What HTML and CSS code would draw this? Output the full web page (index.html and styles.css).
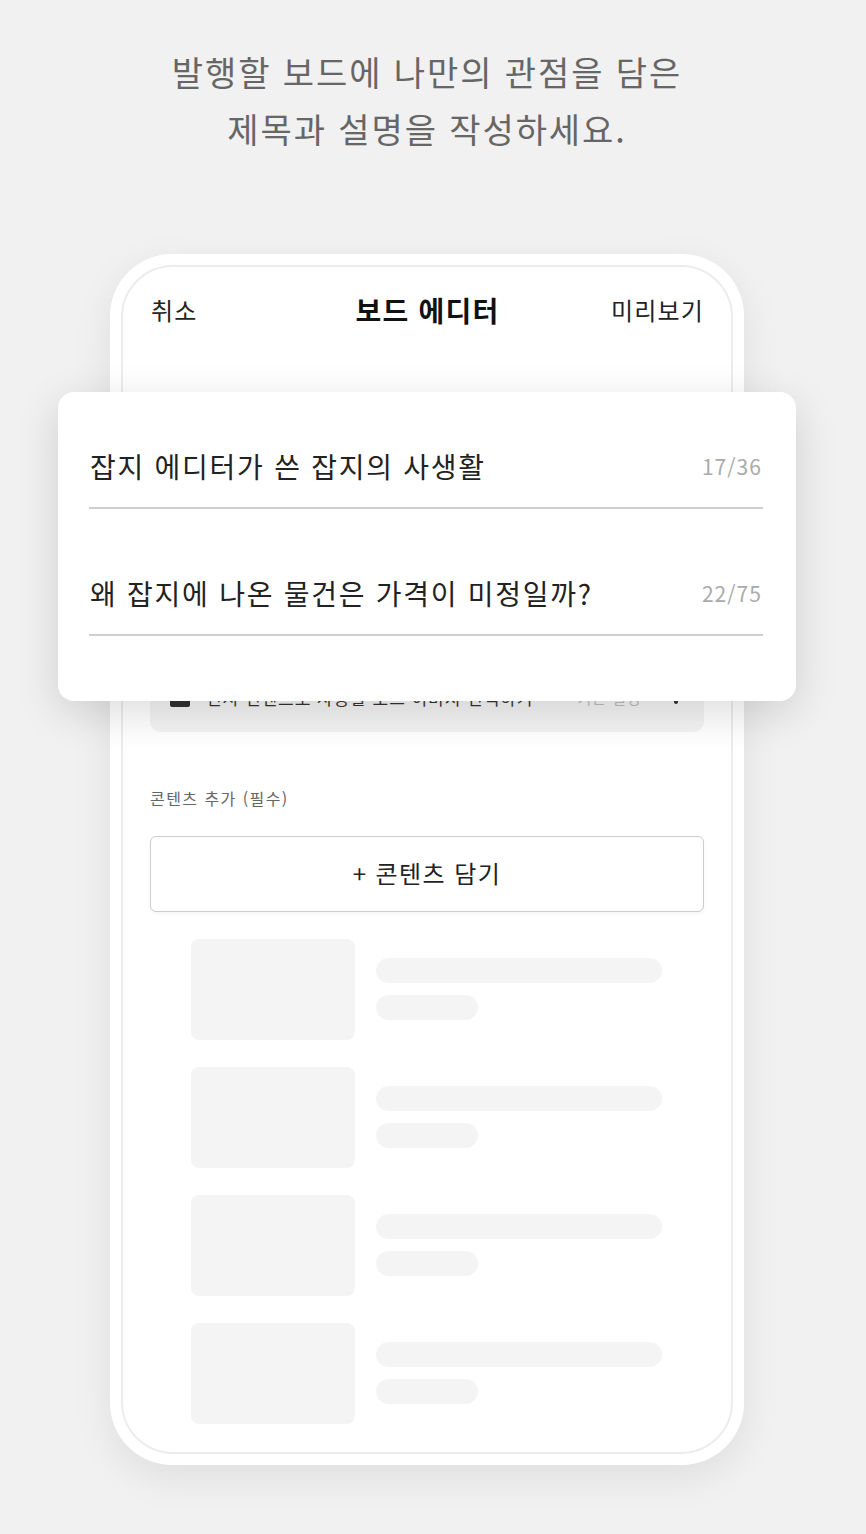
FILE: index.html
```html
<!DOCTYPE html>
<html lang="ko">
<head>
<meta charset="utf-8">
<title>보드 에디터</title>
<link rel="stylesheet" href="styles.css">
</head>
<body>
<div class="page">
  <h1 class="headline">발행할 보드에 나만의 관점을 담은<br>제목과 설명을 작성하세요.</h1>

  <div class="phone">
    <div class="screen">
      <div class="topbar">
        <span class="side left">취소</span>
        <span class="title">보드 에디터</span>
        <span class="side right">미리보기</span>
      </div>

      <div class="fields">
        <div class="mini-field">잡지 에디터가 쓴 잡지의 사생활</div>
        <div class="mini-field">왜 잡지에 나온 물건은 가격이 미정일까?</div>
      </div>

      <div class="option-box">
        <span class="option-icon"></span>
        <span class="option-text">전시 컨텐츠로 사용할 보드 이미지 선택하기</span>
        <span class="option-sub">기본 설정</span>
        <span class="option-mark"></span>
      </div>

      <div class="label">콘텐츠 추가 (필수)</div>
      <button class="add-btn">+ 콘텐츠 담기</button>

      <div class="skeleton-list">
        <div class="sk-row"><div class="sk-thumb"></div><div class="sk-lines"><div class="sk-bar long"></div><div class="sk-bar short"></div></div></div>
        <div class="sk-row"><div class="sk-thumb"></div><div class="sk-lines"><div class="sk-bar long"></div><div class="sk-bar short"></div></div></div>
        <div class="sk-row"><div class="sk-thumb"></div><div class="sk-lines"><div class="sk-bar long"></div><div class="sk-bar short"></div></div></div>
        <div class="sk-row"><div class="sk-thumb"></div><div class="sk-lines"><div class="sk-bar long"></div><div class="sk-bar short"></div></div></div>
      </div>
    </div>

    <div class="card">
      <div class="field">
        <span class="field-text">잡지 에디터가 쓴 잡지의 사생활</span>
        <span class="count">17/36</span>
      </div>
      <div class="field">
        <span class="field-text">왜 잡지에 나온 물건은 가격이 미정일까?</span>
        <span class="count">22/75</span>
      </div>
    </div>
  </div>
</div>
</body>
</html>
```

FILE: styles.css
```css
* { box-sizing: border-box; }

html, body {
  margin: 0;
  padding: 0;
  background: #f1f1f1;
}

body {
  font-family: "Noto Sans CJK KR", "Noto Sans", sans-serif;
  color: #222;
  letter-spacing: 0.06em;
}

.page {
  width: 854px;
  display: flex;
  flex-direction: column;
  align-items: center;
  padding-bottom: 69px;
}

.headline {
  margin: 0;
  padding-top: 43px;
  font-size: 34px;
  line-height: 57px;
  font-weight: 400;
  color: #666;
  text-align: center;
  letter-spacing: 0.056em;
}

.phone {
  position: relative;
  margin-top: 97px;
  width: 634px;
  padding: 11px;
  background: #fff;
  border-radius: 62px;
  box-shadow: 0 12px 40px rgba(0, 0, 0, 0.08);
}

.screen {
  border: 2px solid #ececec;
  border-radius: 52px;
  padding: 0 27px 28px;
  display: flex;
  flex-direction: column;
}

.topbar {
  display: grid;
  grid-template-columns: 1fr auto 1fr;
  align-items: start;
  padding: 25px 0 0 1px;
  height: 92px;
}

.topbar .side {
  font-size: 24px;
  line-height: 36px;
  letter-spacing: 0.05em;
  color: #222;
}

.topbar .left { justify-self: start; }
.topbar .right { justify-self: end; }

.topbar .title {
  font-size: 28px;
  line-height: 36px;
  font-weight: 700;
  letter-spacing: 0.045em;
  color: #111;
}

.fields {
  height: 303px;
  display: flex;
  flex-direction: column;
  gap: 20px;
  padding-top: 40px;
}

.mini-field {
  font-size: 18px;
  border-bottom: 1px solid #ccc;
  padding: 16px 0;
}

.option-box {
  height: 70px;
  background: #f4f4f4;
  border-radius: 10px;
  display: flex;
  align-items: center;
  padding: 0 26px 0 20px;
  gap: 16px;
}

.option-icon {
  width: 20px;
  height: 20px;
  background: #333;
  border-radius: 2px;
  flex: none;
}

.option-text {
  font-size: 17px;
  color: #333;
}

.option-sub {
  font-size: 15px;
  color: #bbb;
  margin-left: 28px;
}

.option-mark {
  margin-left: auto;
  width: 4px;
  height: 14px;
  background: #333;
  border-radius: 2px;
}

.label {
  margin-top: 54px;
  font-size: 16px;
  line-height: 24px;
  letter-spacing: 0.09em;
  color: #666;
}

.add-btn {
  margin-top: 26px;
  height: 76px;
  width: 100%;
  background: #fff;
  border: 1.5px solid #ccc;
  border-radius: 6px;
  font-family: "Noto Sans CJK KR", "Noto Sans", sans-serif;
  font-size: 24px;
  letter-spacing: 0.06em;
  color: #222;
  padding-bottom: 4px;
  box-shadow: 0 2px 4px rgba(0, 0, 0, 0.04);
}

.skeleton-list {
  margin-top: 27px;
  padding-left: 41px;
  display: flex;
  flex-direction: column;
  gap: 27px;
}

.sk-row {
  display: flex;
  gap: 21px;
}

.sk-thumb {
  width: 164px;
  height: 101px;
  background: #f4f4f4;
  border-radius: 8px;
  flex: none;
}

.sk-lines {
  padding-top: 19px;
  display: flex;
  flex-direction: column;
  gap: 12px;
}

.sk-bar {
  height: 25px;
  background: #f4f4f4;
  border-radius: 13px;
}

.sk-bar.long { width: 286px; }
.sk-bar.short { width: 102px; }

.card {
  position: absolute;
  left: -52px;
  top: 138px;
  width: 738px;
  height: 309px;
  background: #fff;
  border-radius: 16px;
  box-shadow: 0 12px 44px rgba(0, 0, 0, 0.14);
  padding: 54px 33px 0 31px;
  display: flex;
  flex-direction: column;
  gap: 64px;
}

.field {
  display: flex;
  justify-content: space-between;
  align-items: center;
  padding: 0 1px 22px 1px;
  border-bottom: 2px solid #cfcfcf;
  height: 63px;
}

.field-text {
  font-size: 28px;
  line-height: 40px;
  letter-spacing: 0.062em;
  color: #222;
}

.count {
  font-size: 21px;
  line-height: 40px;
  letter-spacing: 0.05em;
  color: #aaa;
}
```
